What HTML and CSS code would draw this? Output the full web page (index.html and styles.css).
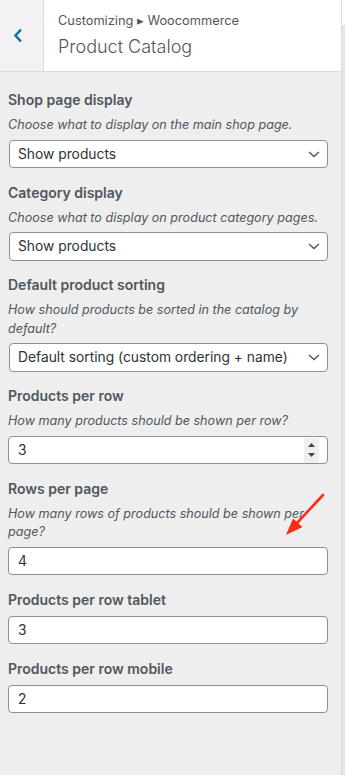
FILE: index.html
```html
<!DOCTYPE html>
<html lang="en">
<head>
<meta charset="utf-8">
<title>Product Catalog</title>
<link rel="stylesheet" href="styles.css">
</head>
<body>
<div class="frame">
  <div class="panel">
    <header class="head">
      <div class="back">
        <svg width="10" height="15" viewBox="0 0 10 15"><path d="M8 1.5 L2.5 7.5 L8 13.5" fill="none" stroke="#0a6ea8" stroke-width="2.5"/></svg>
      </div>
      <div class="titles">
        <div class="crumb">Customizing ▸ Woocommerce</div>
        <h1 class="title">Product Catalog</h1>
      </div>
    </header>
    <main class="controls">
      <section class="control">
        <div class="ctitle">Shop page display</div>
        <p class="cdesc">Choose what to display on the main shop page.</p>
        <div class="field select">Show products<svg class="chev" width="12" height="7" viewBox="0 0 12 7"><path d="M1 1 L6 5.5 L11 1" fill="none" stroke="#50575e" stroke-width="1.4"/></svg></div>
      </section>
      <section class="control">
        <div class="ctitle">Category display</div>
        <p class="cdesc">Choose what to display on product category pages.</p>
        <div class="field select">Show products<svg class="chev" width="12" height="7" viewBox="0 0 12 7"><path d="M1 1 L6 5.5 L11 1" fill="none" stroke="#50575e" stroke-width="1.4"/></svg></div>
      </section>
      <section class="control">
        <div class="ctitle">Default product sorting</div>
        <p class="cdesc">How should products be sorted in the catalog by default?</p>
        <div class="field select">Default sorting (custom ordering + name)<svg class="chev" width="12" height="7" viewBox="0 0 12 7"><path d="M1 1 L6 5.5 L11 1" fill="none" stroke="#50575e" stroke-width="1.4"/></svg></div>
      </section>
      <section class="control">
        <div class="ctitle">Products per row</div>
        <p class="cdesc">How many products should be shown per row?</p>
        <div class="field input">3<span class="spin"><svg width="9" height="20" viewBox="0 0 9 20"><path d="M4.5 3 L8 7 L1 7 Z" fill="#3c434a"/><path d="M1 13 L8 13 L4.5 17 Z" fill="#3c434a"/></svg></span></div>
      </section>
      <section class="control">
        <div class="ctitle">Rows per page</div>
        <p class="cdesc">How many rows of products should be shown per page?</p>
        <div class="field input">4</div>
      </section>
      <section class="control">
        <div class="ctitle solo">Products per row tablet</div>
        <div class="field input">3</div>
      </section>
      <section class="control">
        <div class="ctitle solo">Products per row mobile</div>
        <div class="field input">2</div>
      </section>
    </main>
  </div>
  <div class="rail"></div>
  <svg class="annot" width="50" height="50" viewBox="0 0 50 50">
    <line x1="46" y1="3" x2="20" y2="31" stroke="#ff2a17" stroke-width="2.6" stroke-linecap="round"/>
    <path d="M9 43 L25.5 35 L16 26.5 Z" fill="#ff2a17"/>
  </svg>
</div>
</body>
</html>
```
FILE: styles.css
```css
* { box-sizing: border-box; }
html, body { margin: 0; padding: 0; }
body {
  width: 345px;
  height: 775px;
  overflow: hidden;
  background: #eeeeee;
  font-family: Inter, "Liberation Sans", sans-serif;
  color: #50575e;
}
.frame {
  position: relative;
  display: flex;
  height: 775px;
}
.panel {
  width: 342px;
  flex: none;
  border-right: 1px solid #dcdcde;
  background: #eeeeee;
}
.rail {
  flex: 1;
  background: linear-gradient(#ffffff 0 25px, #e6e6e6 25px);
}
.head {
  display: flex;
  height: 72px;
  background: #ffffff;
  border-bottom: 1px solid #dcdcde;
}
.back {
  width: 44px;
  flex: none;
  background: #f2f2f4;
  border-right: 1px solid #dcdcde;
  display: flex;
  align-items: center;
  justify-content: center;
  padding: 0 7px 0 0;
}
.titles {
  padding: 13px 0 0 14px;
}
.crumb {
  font-size: 12.8px;
  line-height: 16px;
  color: #50575e;
}
.title {
  margin: 6px 0 0;
  font-size: 18px;
  line-height: 24px;
  font-weight: 300;
  color: #50575e;
}
.controls {
  padding: 18px 13px 0 8px;
}
.control {
  margin-bottom: 14.5px;
}
.ctitle {
  font-size: 14px;
  line-height: 20px;
  font-weight: 600;
  margin-bottom: 6px;
  color: #50575e;
}
.ctitle.solo { margin-bottom: 6px; }
.cdesc {
  margin: 0 0 5px;
  font-size: 12.6px;
  line-height: 18.5px;
  font-style: italic;
  color: #50575e;
}
.field {
  position: relative;
  height: 28.5px;
  border: 1px solid #8c8f94;
  border-radius: 4px;
  background: #ffffff;
  font-size: 13.8px;
  line-height: 26.5px;
  color: #2c3338;
  padding-left: 9px;
  display: flex;
  align-items: center;
}
.select {
  margin-left: 1px;
  padding-left: 8px;
}
.chev {
  position: absolute;
  right: 7px;
  top: 10px;
}
.spin {
  position: absolute;
  right: 8px;
  top: 1px;
  width: 15px;
  height: 25px;
  background: #efefef;
  display: flex;
  align-items: center;
  justify-content: center;
}
.annot {
  position: absolute;
  left: 277px;
  top: 492px;
}
```
